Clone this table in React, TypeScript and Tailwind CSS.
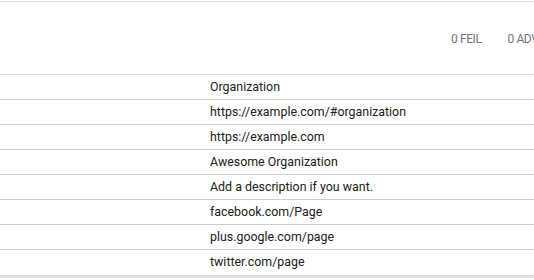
const rows = [
  'Organization',
  'https://example.com/#organization',
  'https://example.com',
  'Awesome Organization',
  'Add a description if you want.',
  'facebook.com/Page',
  'plus.google.com/page',
  'twitter.com/page',
];

export default function App() {
  return (
    <div className="w-[534px] h-[280px] overflow-hidden bg-white font-['Roboto',sans-serif]">
      <div className="mt-px border-t border-b border-[#e0e0e0] h-[74px] flex items-center">
        <div className="ml-[451px] flex gap-[26px] whitespace-nowrap text-[12px] tracking-[-0.4px] text-[#757575] mt-[2px]">
          <span>0 FEIL</span>
          <span>0 ADVARSLER</span>
        </div>
      </div>
      <div className="border-b-[3px] border-[#e0e0e0]">
        {rows.map((r, i) => (
          <div
            key={r}
            className={`h-[25px] flex items-center pl-[210px] text-[12.4px] text-[#212121] ${
              i < rows.length - 1 ? 'border-b border-[#cfcfcf]' : ''
            }`}
          >
            {r}
          </div>
        ))}
      </div>
    </div>
  );
}
